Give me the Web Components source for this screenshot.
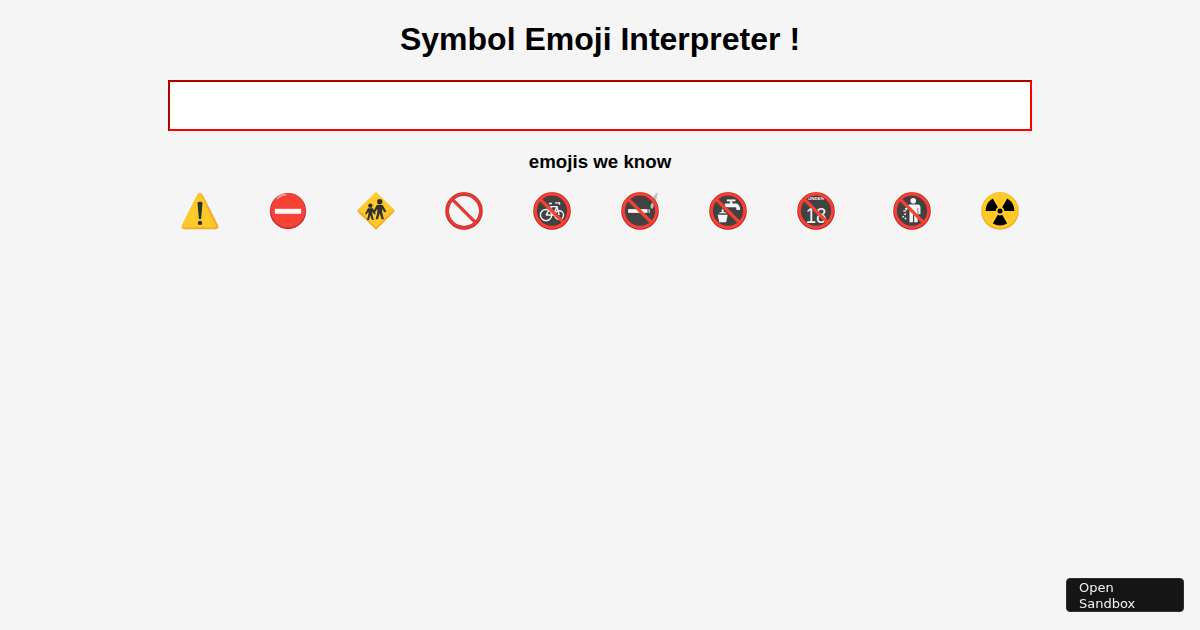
<!DOCTYPE html>
<html lang="en">
<head>
<meta charset="utf-8">
<title>Symbol Emoji Interpreter</title>
<style>
    body {
        margin: 0;
        height: 630px;
        overflow: hidden;
        background: #f5f5f5;
        font-family: "Liberation Sans", Arial, sans-serif;
    }
</style>
</head>
<body>
<emoji-app>
    <emoji-input></emoji-input>
    <emoji-icon name="warning" label="warning"></emoji-icon>
    <emoji-icon name="noentry" label="no entry"></emoji-icon>
    <emoji-icon name="children" label="children crossing"></emoji-icon>
    <emoji-icon name="prohibited" label="prohibited"></emoji-icon>
    <emoji-icon name="nobike" label="no bicycles"></emoji-icon>
    <emoji-icon name="nosmoke" label="no smoking"></emoji-icon>
    <emoji-icon name="nowater" label="non-potable water"></emoji-icon>
    <emoji-icon name="under18" label="no one under eighteen" wide></emoji-icon>
    <emoji-icon name="nolitter" label="no littering"></emoji-icon>
    <emoji-icon name="radioactive" label="radioactive"></emoji-icon>
</emoji-app>
<sandbox-button>Open Sandbox</sandbox-button>

<script>
    // red ring and slash around a dark disc, shared by the "no ..." signs
    const noSign = (inner) => `
        <circle cx="64" cy="64" r="55" fill="#424242"/>
        ${inner}
        <circle cx="64" cy="64" r="54" fill="none" stroke="#b71c1c" stroke-width="12"/>
        <circle cx="64" cy="63" r="53" fill="none" stroke="#f44336" stroke-width="9"/>
        <path d="M26 26L102 102" stroke="#f44336" stroke-width="11"/>`;

    const blade = 'M71 76.1L87 104A47 47 0 0 1 41 104L57 76.1A14 14 0 0 0 71 76.1Z';

    const child = (x, y, s) => `
        <g transform="translate(${x} ${y}) scale(${s})" fill="#2f2f2f">
            <circle cx="0" cy="-27" r="9"/>
            <path d="M-10-16H10L22 6 16 9 8-3V8L14 32H6L0 12-6 32H-14L-8 8V-3L-16 9-22 6Z"/>
        </g>`;

    const ICONS = {
        warning: `
            <path d="M64 6C60 6 57 9 55 13L7 108C3 116 6 122 14 122H114C122 122 125 116 121 108L73 13C71 9 68 6 64 6Z" fill="#f9a825"/>
            <path d="M62 8C59 8 57 10 55 14L8 108C5 114 7 117 13 117H109C115 117 116 113 113 107L69 14C67 10 65 8 62 8Z" fill="#ffca28"/>
            <path d="M56 38C56 33 72 33 72 38L68 86C68 91 60 91 60 86Z" fill="#2f2f2f"/>
            <circle cx="64" cy="102" r="7" fill="#2f2f2f"/>`,
        noentry: `
            <circle cx="64" cy="64" r="58" fill="#c62828"/>
            <circle cx="64" cy="62" r="55" fill="#f44336"/>
            <path d="M30 24C38 15 48 11 56 11" fill="none" stroke="#ef9a9a" stroke-width="6" stroke-linecap="round"/>
            <rect x="22" y="57" width="84" height="16" fill="#fff" opacity=".95"/>`,
        children: `
            <path d="M64 9L119 64 64 119 9 64Z" fill="#f9a825" stroke="#f9a825" stroke-width="8" stroke-linejoin="round"/>
            <path d="M64 8L116 60 64 112 12 60Z" fill="#ffca28" stroke="#ffca28" stroke-width="6" stroke-linejoin="round"/>
            ${child(46, 68, .78)}${child(76, 60, .95)}`,
        prohibited: `
            <circle cx="64" cy="64" r="54" fill="none" stroke="#c62828" stroke-width="12"/>
            <circle cx="64" cy="63" r="53" fill="none" stroke="#e53935" stroke-width="9"/>
            <path d="M26 26L102 102" stroke="#e53935" stroke-width="11"/>`,
        nobike: noSign(`
            <g fill="none" stroke="#f5f5f5" stroke-width="4.5">
                <circle cx="45" cy="77" r="18"/><circle cx="87" cy="77" r="14"/>
                <path d="M45 77L60 50H80L87 77M60 50L68 77H45M68 77L80 50M54 40H64M74 38H88V44"/>
            </g>`),
        nosmoke: noSign(`
            <rect x="26" y="58" width="62" height="12" fill="#f5f5f5"/>
            <rect x="91" y="58" width="5" height="12" fill="#bdbdbd"/>
            <path d="M99 56C92 42 110 36 106 22C110 12 118 6 122 5C116 16 120 26 112 38C108 46 106 50 106 56Z" fill="#bdbdbd"/>`),
        nowater: noSign(`
            <rect x="60" y="27" width="28" height="6" fill="#f5f5f5"/>
            <path d="M70 33V40H54V52H88C90 52 91 54 91 61H103C103 46 96 40 86 40H78V33Z" fill="#f5f5f5"/>
            <path d="M31 76H63L58 100H36ZM34 71C38 66 56 66 60 71Z" fill="#f5f5f5"/>
            <path d="M47 56L51 63A4 4 0 0 1 43 63Z" fill="#f5f5f5"/>`),
        under18: noSign(`
            <text x="64" y="30" text-anchor="middle" style="font-family:'Liberation Sans',sans-serif" font-size="14" font-weight="700" fill="#f5f5f5" textLength="52">UNDER</text>
            <text x="64" y="101" text-anchor="middle" style="font-family:'Liberation Sans',sans-serif" font-size="72" fill="#f5f5f5" textLength="66" lengthAdjust="spacingAndGlyphs">18</text>`),
        nolitter: noSign(`
            <circle cx="68" cy="31" r="9" fill="#f5f5f5"/>
            <path d="M55 43H82C88 43 91 47 91 51V74H84V54H82V100H71V77H67V100H56V54H54L45 62 41 57Z" fill="#f5f5f5"/>
            <rect x="36" y="62" width="9" height="4" fill="#f5f5f5"/>
            <circle cx="42" cy="74" r="3" fill="#f5f5f5"/><circle cx="36" cy="82" r="3" fill="#f5f5f5"/>
            <circle cx="43" cy="88" r="3" fill="#f5f5f5"/>`),
        radioactive: `
            <circle cx="64" cy="64" r="60" fill="#f9a825"/>
            <circle cx="64" cy="62" r="57" fill="#ffca28"/>
            <path d="${blade}"/>
            <path d="${blade}" transform="rotate(120 64 64)"/>
            <path d="${blade}" transform="rotate(240 64 64)"/>
            <circle cx="64" cy="64" r="8"/>`
    };

    class EmojiApp extends HTMLElement {
        constructor() {
            super();
            this.attachShadow({ mode: 'open' }).innerHTML = `
                <style>
                    :host {
                        display: flex;
                        flex-direction: column;
                        align-items: center;
                        padding-top: 20px;
                        color: #000;
                    }
                    h1 {
                        margin: 0 0 22px;
                        font-size: 32px;
                        line-height: 38px;
                        font-weight: 700;
                    }
                    h2 {
                        margin: 19px 0 18px;
                        font-size: 18.72px;
                        line-height: 23px;
                        font-weight: 700;
                    }
                    .row {
                        display: flex;
                        gap: 48px;
                    }
                </style>
                <h1>Symbol Emoji Interpreter !</h1>
                <slot name="input"></slot>
                <h2>emojis we know</h2>
                <div class="row"><slot></slot></div>
            `;
        }

        connectedCallback() {
            const field = this.querySelector('emoji-input');
            if (field) field.slot = 'input';
        }
    }

    class EmojiInput extends HTMLElement {
        constructor() {
            super();
            this.attachShadow({ mode: 'open' }).innerHTML = `
                <style>
                    :host { display: block; }
                    input {
                        display: block;
                        box-sizing: border-box;
                        width: 864px;
                        height: 51px;
                        padding: 0 10px;
                        background: #fff;
                        border: 2px solid #f00;
                        border-top-color: #b00000;
                        border-left-color: #b00000;
                        font: 16px "Liberation Sans", Arial, sans-serif;
                    }
                </style>
                <input type="text" aria-label="emoji">
            `;
        }
    }

    class EmojiIcon extends HTMLElement {
        constructor() {
            super();
            this.attachShadow({ mode: 'open' });
        }

        connectedCallback() {
            const name = this.getAttribute('name');
            const label = this.getAttribute('label') || name;
            this.shadowRoot.innerHTML = `
                <style>
                    :host {
                        display: block;
                        width: ${this.hasAttribute('wide') ? 48 : 40}px;
                        height: 40px;
                    }
                    svg { display: block; width: 40px; height: 40px; }
                </style>
                <svg viewBox="0 0 128 128" role="img" aria-label="${label}">${ICONS[name]}</svg>
            `;
        }
    }

    class SandboxButton extends HTMLElement {
        constructor() {
            super();
            this.attachShadow({ mode: 'open' }).innerHTML = `
                <style>
                    :host {
                        position: fixed;
                        right: 16px;
                        bottom: 18px;
                        box-sizing: border-box;
                        width: 118px;
                        height: 34px;
                        padding: 1px 40px 1px 12px;
                        background: #151515;
                        border: 1px solid #2e2e2e;
                        border-radius: 4px;
                        color: #f2f2f2;
                        font: 13px/16px "DejaVu Sans", sans-serif;
                    }
                </style>
                <slot></slot>
            `;
        }
    }

    customElements.define('emoji-app', EmojiApp);
    customElements.define('emoji-input', EmojiInput);
    customElements.define('emoji-icon', EmojiIcon);
    customElements.define('sandbox-button', SandboxButton);
</script>
</body>
</html>
